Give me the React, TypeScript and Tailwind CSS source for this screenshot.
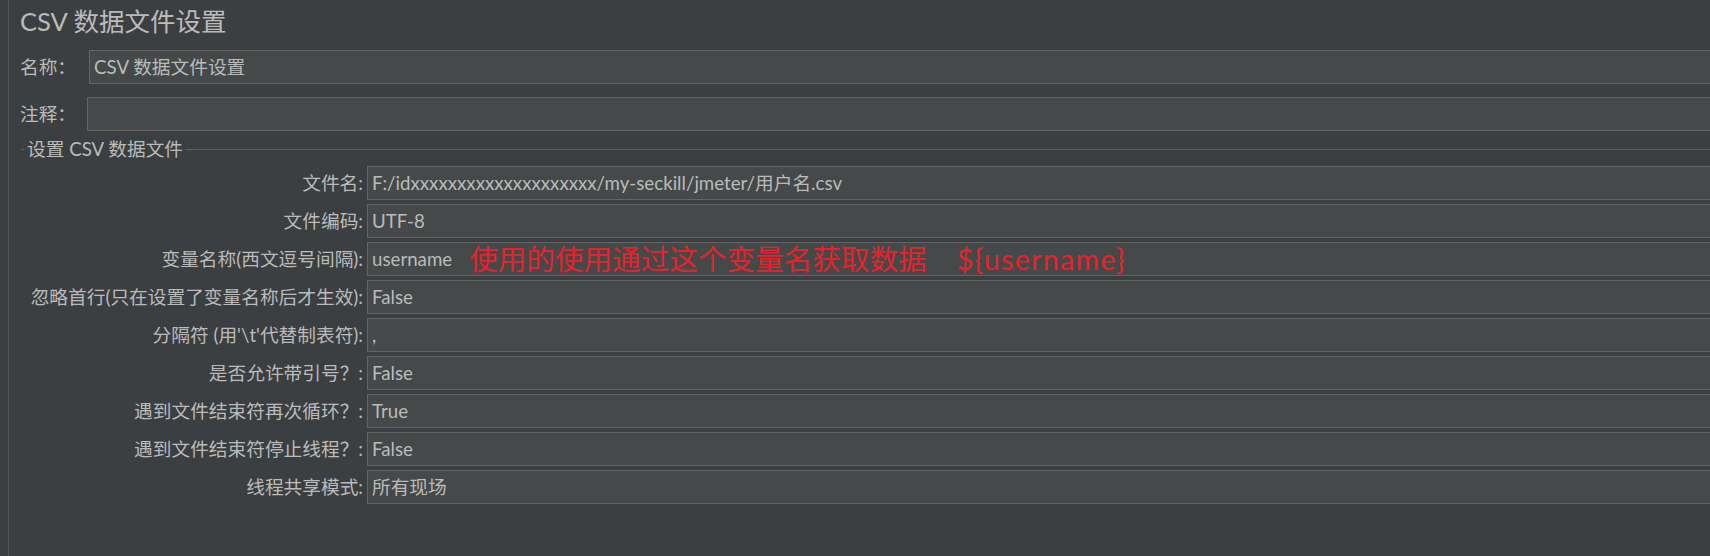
import React from "react";

const path = "F:/id" + "xxxxxxxxxxxxxxxxxxxx" + "/my-seckill/jmeter/用户名.csv";

const rows: { label: string; value: string; extra?: boolean }[] = [
  { label: "文件名:", value: path },
  { label: "文件编码:", value: "UTF-8" },
  { label: "变量名称(西文逗号间隔):", value: "username", extra: true },
  { label: "忽略首行(只在设置了变量名称后才生效):", value: "False" },
  { label: "分隔符 (用'\\t'代替制表符):", value: "," },
  { label: "是否允许带引号？:", value: "False" },
  { label: "遇到文件结束符再次循环？:", value: "True" },
  { label: "遇到文件结束符停止线程？:", value: "False" },
  { label: "线程共享模式:", value: "所有现场" },
];

export default function App() {
  return (
    <div className="w-[1710px] h-[556px] bg-[#3c3f41] overflow-hidden flex text-[#bbbbbb] font-['Lato','Noto_Sans_CJK_SC',sans-serif]">
      <div className="ml-[8px] w-[1760px] shrink-0 border-l border-[#505456] flex flex-col">
        {/* Title */}
        <div className="pl-[11px] mt-[4px] h-[34px] text-[25.5px] leading-[34px] whitespace-nowrap">
          CSV 数据文件设置
        </div>

        {/* Name */}
        <div className="mt-[12px] pl-[11px] flex items-center h-[34px] text-[18.7px]">
          <div className="w-[69px] shrink-0 whitespace-nowrap">名称：</div>
          <div className="flex-1 h-[34px] border border-[#646464] bg-[#45494a] px-[4px] flex items-center whitespace-nowrap">
            CSV 数据文件设置
          </div>
        </div>

        {/* Comment */}
        <div className="mt-[13px] pl-[11px] flex items-center h-[34px] text-[18.7px]">
          <div className="w-[67px] shrink-0 whitespace-nowrap">注释：</div>
          <div className="flex-1 h-[34px] border border-[#646464] bg-[#45494a]" />
        </div>

        {/* Group header */}
        <div className="mt-[7px] h-[23px] pl-[12px] flex items-center text-[18.7px]">
          <div className="w-[4px] h-px bg-[#5d6163]" />
          <div className="mx-[2px] whitespace-nowrap leading-none">设置 CSV 数据文件</div>
          <div className="flex-1 h-px bg-[#5d6163]" />
        </div>

        {/* Rows */}
        <div className="mt-[5px] flex flex-col gap-[4px] text-[18.7px]">
          {rows.map((r) => (
            <div key={r.label} className="flex items-center h-[34px]">
              <div className="w-[358px] shrink-0 pr-[4px] text-right whitespace-nowrap">{r.label}</div>
              <div className="flex-1 h-[34px] border border-[#646464] bg-[#45494a] px-[4px] flex items-center whitespace-nowrap overflow-visible">
                <span>{r.value}</span>
                {r.extra && (
                  <>
                    <span className="ml-[17px] text-[28.6px] leading-none text-[#e6222a]">使用的使用通过这个变量名获取数据</span>
                    <span className="ml-[30px] text-[28.6px] leading-none tracking-[1.3px] text-[#e6222a]">{"${username}"}</span>
                  </>
                )}
              </div>
            </div>
          ))}
        </div>
      </div>
    </div>
  );
}
